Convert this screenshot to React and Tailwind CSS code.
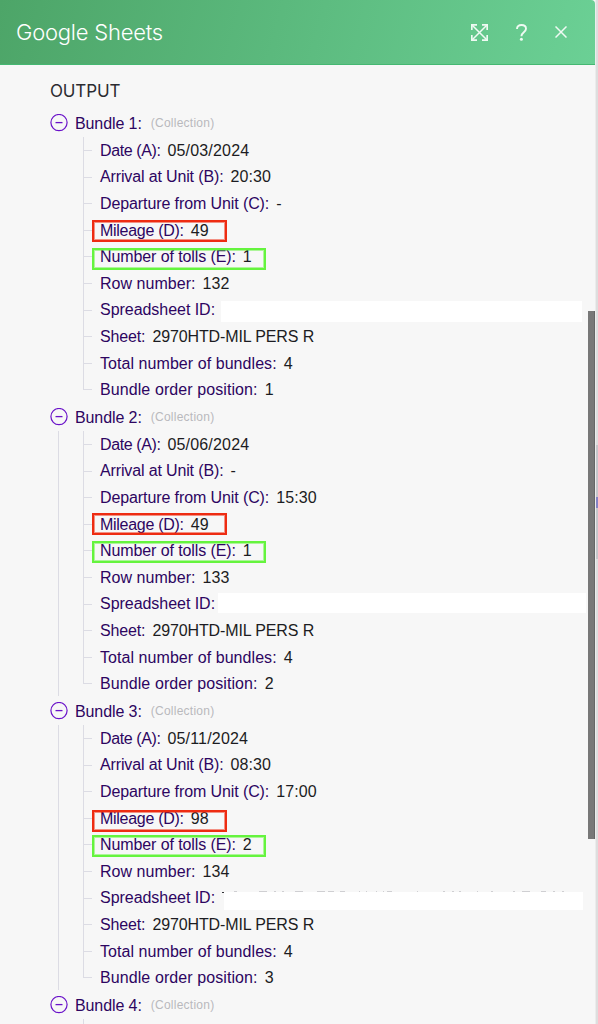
import clsx from "clsx";

const bundles = [
  {
    id: 1,
    date: "05/03/2024",
    arrival: "20:30",
    departure: "-",
    mileage: "49",
    tolls: "1",
    row: "132",
    mileageBox: "top-[3px]",
    tollsBox: "top-[5px]",
    mask: "left-[138px] top-[4px] w-[361px] h-[21px]",
  },
  {
    id: 2,
    date: "05/06/2024",
    arrival: "-",
    departure: "15:30",
    mileage: "49",
    tolls: "1",
    row: "133",
    mileageBox: "top-[2px]",
    tollsBox: "top-[4px]",
    mask: "left-[135px] top-[2px] w-[368px] h-[20px]",
  },
  {
    id: 3,
    date: "05/11/2024",
    arrival: "08:30",
    departure: "17:00",
    mileage: "98",
    tolls: "2",
    row: "134",
    mileageBox: "top-[5px]",
    tollsBox: "top-[4px]",
    mask: "left-[141px] top-[7px] w-[359px] h-[18px]",
    clipped: true,
  },
];

const Field = ({ label, value, last, tracking, valueTracking, children }) => (
  <li className="relative flex h-[26.6px]">
    <span
      className={clsx("border-l border-[#dcdce4]", last ? "h-[14px]" : "h-full")}
    />
    <span className="mr-[8px] mt-[13px] h-px w-[8px] bg-[#dcdce4]" />
    <span className={clsx("pt-[5.8px] text-[#2d0561]", tracking)}>{label}:</span>
    <span
      className={clsx(
        "pl-[7px] pt-[5.8px] text-[#1c1c22]",
        valueTracking || "tracking-[0.1px]"
      )}
    >
      {value}
    </span>
    {children}
  </li>
);

const BundleTitle = ({ id }) => (
  <div className="flex h-[28px] items-center">
    <svg className="h-[18px] w-[18px]" viewBox="0 0 18 18" fill="none" stroke="#6a12c9">
      <circle cx="9" cy="8.6" r="8.1" strokeWidth="1.2" />
      <path d="M5.5 8.6h7" strokeWidth="1.3" />
    </svg>
    <span className="pl-[7px] pt-[2px] text-[#2d0561]">Bundle {id}:</span>
    <span className="pl-[9px] text-[12px] tracking-[0.25px] text-[#b9b9bd]">
      (Collection)
    </span>
  </div>
);

const Bundle = ({ bundle }) => (
  <section className="h-[294px]">
    <BundleTitle id={bundle.id} />
    <div className="flex">
      <span
        className={clsx(
          "ml-[8px] mr-[24px] h-[265px] w-px",
          bundle.id > 1 && "bg-[#dcdce4]"
        )}
      />
      <ul>
        <Field
          label="Date (A)"
          value={bundle.date}
          tracking="tracking-[-0.4px]"
          valueTracking="tracking-[0.18px]"
        />
        <Field
          label="Arrival at Unit (B)"
          value={bundle.arrival}
          tracking="tracking-[-0.14px]"
        />
        <Field label="Departure from Unit (C)" value={bundle.departure} />
        <Field
          label="Mileage (D)"
          value={bundle.mileage}
          tracking="tracking-[-0.28px]"
        >
          <span
            className={clsx(
              "absolute left-[9px] h-[22px] w-[135px] border-2 border-[#ee2c12] outline-1 -outline-offset-3 outline-[#ee2c12]/50",
              bundle.mileageBox
            )}
          />
        </Field>
        <Field label="Number of tolls (E)" value={bundle.tolls}>
          <span
            className={clsx(
              "absolute left-[9px] h-[22px] w-[174px] border-2 border-[#65f43e] outline-1 -outline-offset-3 outline-[#65f43e]/50",
              bundle.tollsBox
            )}
          />
        </Field>
        <Field
          label="Row number"
          value={bundle.row}
          tracking="tracking-[0.03px]"
        />
        <Field
          label="Spreadsheet ID"
          value=""
          tracking="tracking-[-0.04px]"
        >
          <span className={clsx("absolute bg-white", bundle.mask)} />
          {bundle.clipped && (
            <svg
              className="absolute left-[138px] top-[5px] h-[3px] w-[350px]"
              viewBox="0 0 350 3"
              fill="none"
            >
              <path d="M1 2.5h2" stroke="#333338" />
              <path
                d="M13 1.5h3M38 1.5h8M53 1.5h2M61 1.5h2M74 1.5h8M96 1.5h8M107 1.5h6M119 1.5h5M138 1.5h1M145 1.5h1M155 1.5h1M162 1.5h1M166 1.5h5M196 1.5h1M222 1.5h2M231 1.5h2M238 1.5h2M256 1.5h1M270 1.5h2M292 1.5h2M301 1.5h8M320 1.5h5M332 1.5h2M341 1.5h2"
                stroke="#cfcfd2"
              />
            </svg>
          )}
        </Field>
        <Field
          label="Sheet"
          value="2970HTD-MIL PERS R"
          tracking="tracking-[-0.15px]"
          valueTracking="tracking-[-0.12px]"
        />
        <Field
          label="Total number of bundles"
          value="4"
          tracking="tracking-[0.06px]"
        />
        <Field
          label="Bundle order position"
          value={bundle.id}
          tracking="tracking-[0.09px]"
          last
        />
      </ul>
    </div>
  </section>
);

const Header = () => (
  <header className="flex h-[65px] items-center justify-between rounded-tr-[4px] border-b border-[#45b872] bg-linear-[105deg,#4da568,#6bd095] pl-[16px] pr-[28px] text-white">
    <h1 className="font-[Inter,sans-serif] text-[22px] font-light tracking-[-0.22px]">
      Google Sheets
    </h1>
    <div className="flex items-center text-[#effaf3]">
      <svg
        className="mr-[28px] h-[17px] w-[17px]"
        viewBox="0 0 17 17"
        fill="none"
        stroke="currentColor"
        strokeWidth="1.5"
      >
        <path d="M.8 6V.8H6M11 .8h5.2V6M16.2 11v5.2H11M6 16.2H.8V11" strokeWidth="1.7" />
        <path d="m1 1 15 15M16 1 1 16" />
      </svg>
      <svg
        className="mr-[28px] h-[17px] w-[11px]"
        viewBox="0 0 11 17"
        fill="none"
        stroke="currentColor"
        strokeWidth="1.9"
      >
        <path d="M1 5C1 2.4 2.8 1 5.5 1S10 2.4 10 4.7C10 8.2 5.4 8.2 5.4 12.2" />
        <circle cx="5.4" cy="15.3" r="1.5" fill="currentColor" stroke="none" />
      </svg>
      <svg
        className="h-[12px] w-[12px]"
        viewBox="0 0 12 12"
        fill="none"
        stroke="currentColor"
        strokeWidth="1.5"
      >
        <path d="m.5.5 11 11M11.5.5l-11 11" />
      </svg>
    </div>
  </header>
);

export default function App() {
  return (
    <div className="relative flex h-[1024px] w-[598px] overflow-hidden bg-[#f7f7f7] font-['Liberation_Sans',Arial,sans-serif] text-[16px] leading-none tracking-[-0.1px]">
      <div className="w-[595px] bg-[#f7f7f7]">
        <Header />
        <main className="pl-[50px] pt-[17px]">
          <h2 className="flex h-[18px] items-center font-[Inter,sans-serif] text-[17px] tracking-[-0.15px] text-[#2b2b30]">
            OUTPUT
          </h2>
          <div className="pt-[9px]">
            {bundles.map((bundle) => (
              <Bundle key={bundle.id} bundle={bundle} />
            ))}
            <BundleTitle id={4} />
            <span className="ml-[33px] block h-4 w-px bg-[#dcdce4]" />
          </div>
        </main>
      </div>
      <div className="flex w-[3px] flex-col border-l border-[#ececec] bg-[#dedede]">
        <span className="h-[445px]" />
        <span className="h-[52px] bg-[#c6c6ca]" />
        <span className="h-[11px] bg-[#8583c5]" />
        <span className="h-[51px] bg-[#c6c6ca]" />
      </div>
      <div className="absolute left-[588px] top-[311px] h-[528px] w-[7px] border-r border-[#666] bg-[#787878]" />
    </div>
  );
}
